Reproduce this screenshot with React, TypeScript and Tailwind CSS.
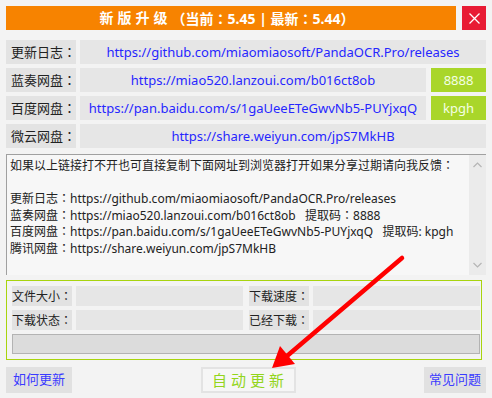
import React from 'react';

const links = [
  { label: '更新日志：', url: 'https://github.com/miaomiaosoft/PandaOCR.Pro/releases' },
  { label: '蓝奏网盘：', url: 'https://miao520.lanzoui.com/b016ct8ob', code: '8888' },
  { label: '百度网盘：', url: 'https://pan.baidu.com/s/1gaUeeETeGwvNb5-PUYjxqQ', code: 'kpgh' },
  { label: '微云网盘：', url: 'https://share.weiyun.com/jpS7MkHB' },
];

const notes = [
  '如果以上链接打不开也可直接复制下面网址到浏览器打开如果分享过期请向我反馈：',
  '',
  '更新日志：https://github.com/miaomiaosoft/PandaOCR.Pro/releases',
  '蓝奏网盘：https://miao520.lanzoui.com/b016ct8ob   提取码：8888',
  '百度网盘：https://pan.baidu.com/s/1gaUeeETeGwvNb5-PUYjxqQ   提取码: kpgh',
  '腾讯网盘：https://share.weiyun.com/jpS7MkHB',
];

// full-width punctuation sits centred in the original UI font, so use the TC face for it
function Cjk({ text }: { text: string }) {
  return (
    <>
      {text.split(/([：（）])/).map((s, i) =>
        /^[：（）]$/.test(s) ? (
          <span key={i} className="inline-block font-['Noto_Sans_CJK_TC',sans-serif]">
            {s}
          </span>
        ) : (
          s
        )
      )}
    </>
  );
}

function InfoCell({ label }: { label: string }) {
  return (
    <div className="flex flex-1 gap-[4px]">
      <div className="w-[60px] h-[20px] bg-[#e2e2e2] text-[12px] leading-[20px] text-[#222] whitespace-nowrap overflow-hidden">
        <Cjk text={label} />
      </div>
      <div className="flex-1 h-[20px] bg-[#e6e6e6]" />
    </div>
  );
}

export default function App() {
  return (
    <div
      className="relative w-[492px] h-[398px] bg-[#f3f3f3] px-[6px] pt-[6px] overflow-hidden"
      style={{ fontFamily: '"Noto Sans", "Noto Sans CJK SC", sans-serif' }}
    >
      {/* Title bar */}
      <div className="flex gap-[6px] h-[24px]">
        <div className="flex-1 bg-[#f78300] flex items-center justify-center text-white font-bold text-[14px] leading-[24px] pr-[8px] whitespace-pre">
          <span className="tracking-[4px]">新版升级</span>
          <span>
            <Cjk text="（当前：5.45 | 最新：5.44）" />
          </span>
        </div>
        <button className="w-[24px] h-[24px] bg-[#e81b34] flex items-center justify-center">
          <svg width="11" height="11" viewBox="0 0 11 11">
            <path d="M0.5 0.5 L10.5 10.5 M10.5 0.5 L0.5 10.5" stroke="#fff" strokeWidth="1.3" />
          </svg>
        </button>
      </div>

      {/* Link rows */}
      <div className="mt-[10px] flex flex-col gap-[4px]">
        {links.map((l) => (
          <div key={l.label} className="flex h-[24px] gap-[4px]">
            <div className="w-[70px] bg-[#e3e3e3] text-[13px] leading-[24px] text-[#222] pl-[5px] whitespace-nowrap">
              <Cjk text={l.label} />
            </div>
            <div className="flex-1 flex gap-[5px]">
              <div className="flex-1 bg-[#e6e6e6] text-[13px] leading-[24px] text-[#2626ff] text-center">
                {l.url}
              </div>
              {l.code && (
                <div className="w-[55px] bg-[#a9d62a] text-[13px] leading-[24px] text-[#f4ffe4] text-center">
                  {l.code}
                </div>
              )}
            </div>
          </div>
        ))}
      </div>

      {/* Notes box */}
      <div className="mt-[6px] h-[121px] flex border-t border-l border-[#a0a0a0] bg-[#f7f7f7]">
        <div className="flex-1 pl-[3px] pt-[2px] text-[12px] text-[#222]">
          {notes.map((line, i) => (
            <div key={i} className="h-[16.6px] leading-[16.6px] whitespace-pre">
              <Cjk text={line} />
            </div>
          ))}
        </div>
        <div className="w-[17px] bg-[#ebebeb] flex flex-col justify-between items-center py-[7px]">
          <svg width="9" height="6" viewBox="0 0 9 6">
            <path d="M0.5 5 L4.5 1 L8.5 5" fill="none" stroke="#b5b5b5" strokeWidth="1.2" />
          </svg>
          <svg width="9" height="6" viewBox="0 0 9 6">
            <path d="M0.5 1 L4.5 5 L8.5 1" fill="none" stroke="#b5b5b5" strokeWidth="1.2" />
          </svg>
        </div>
      </div>

      {/* Download status */}
      <div className="mt-[5px] w-[476px] border border-[#a8d40e] pl-[5px] pr-[1px] py-[5px] flex flex-col gap-[4px]">
        <div className="flex gap-[6px]">
          <InfoCell label="文件大小：" />
          <InfoCell label="下载速度：" />
        </div>
        <div className="flex gap-[6px]">
          <InfoCell label="下载状态：" />
          <InfoCell label="已经下载：" />
        </div>
        <div className="h-[20px] bg-[#dcdcdc] border border-[#b3b3b3]" />
      </div>

      {/* Buttons */}
      <div className="mt-[7px] flex justify-between items-center">
        <button className="w-[66px] h-[26px] bg-[#e1e1e1] text-[13px] text-[#3a3aff]">如何更新</button>
        <button className="w-[95px] h-[26px] border-2 border-[#e3e3e3] bg-[#f6f6f6] text-[15px] tracking-[4px] pl-[4px] text-[#93d51c]">
          自动更新
        </button>
        <button className="w-[62px] h-[26px] bg-[#e1e1e1] text-[13px] text-[#3a3aff]">常见问题</button>
      </div>

      {/* Red annotation arrow */}
      <svg className="absolute left-0 top-0 pointer-events-none" width="492" height="398" viewBox="0 0 492 398">
        <line x1="402" y1="258" x2="287" y2="356" stroke="#ff0000" strokeWidth="4.5" strokeLinecap="round" />
        <polygon points="272,368 280,346 295,364" fill="#ff0000" />
      </svg>
    </div>
  );
}
